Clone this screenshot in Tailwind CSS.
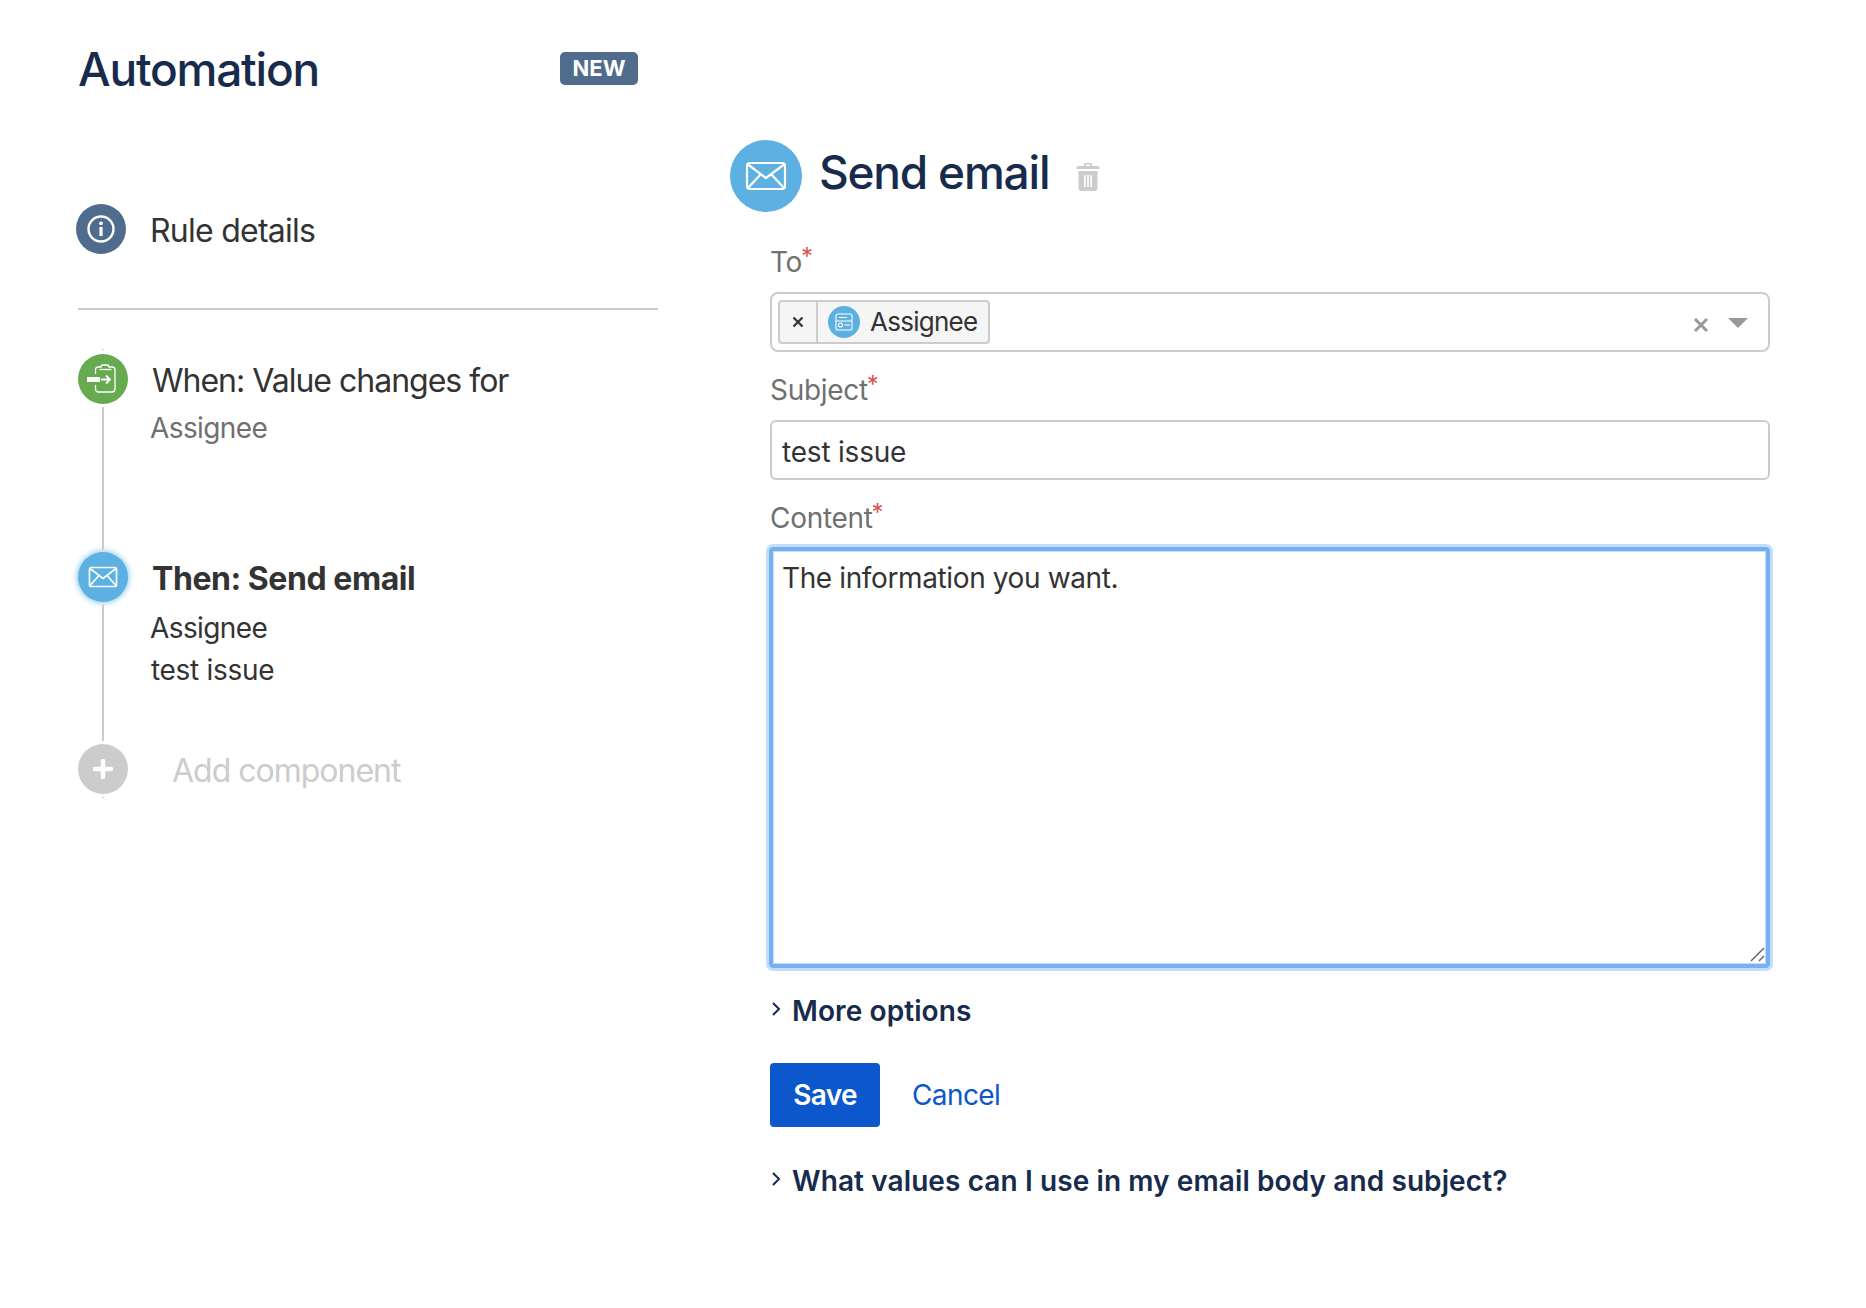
<!DOCTYPE html>
<html lang="en">
  <head>
    <meta charset="UTF-8" />
    <script src="https://cdn.jsdelivr.net/npm/@tailwindcss/browser@4"></script>
    <title>Automation</title>
  </head>
  <body class="h-[1308px] w-[1866px] flex bg-white font-['Inter',sans-serif] overflow-hidden">
    <!-- Sidebar -->
    <aside class="w-[730px] shrink-0 pl-[76px] flex flex-col">
      <div class="h-[52px] mt-[42px] flex items-center w-[562px] justify-between pl-[2px]">
        <h1 class="text-[46px] leading-[52px] mt-[1px] font-medium tracking-[-1.2px] text-[#172b4d]">Automation</h1>
        <span class="h-[33px] w-[78px] flex items-center justify-center rounded-[5px] bg-[#4f6c8c] text-white text-[22px] font-bold">NEW</span>
      </div>

      <div class="mt-[110px] flex items-center h-[50px]">
        <span class="w-[50px] h-[50px] rounded-full bg-[#4f6c8c] flex items-center justify-center">
          <svg width="30" height="30" viewBox="0 0 30 30" fill="none">
            <circle cx="15" cy="15" r="12.5" stroke="#fff" stroke-width="2.4" />
            <rect x="13.4" y="13" width="3.2" height="9" fill="#fff" />
            <circle cx="15" cy="9.3" r="1.9" fill="#fff" />
          </svg>
        </span>
        <span class="ml-[24px] mt-[4px] text-[32px] leading-[50px] tracking-[-0.75px] text-[#333]">Rule details</span>
      </div>

      <div class="mt-[54px] ml-[2px] w-[580px] h-[2px] bg-[#ccc]"></div>

      <!-- Steps -->
      <div class="ml-[2px] mt-[38px] flex flex-col">
        <div class="h-[6px] w-[50px] flex justify-center"><span class="w-[2px] h-[1px] mt-[1px] bg-[#ccc]"></span></div>
        <div class="flex h-[198px]">
          <div class="w-[50px] flex flex-col items-center">
            <span class="w-[50px] h-[50px] shrink-0 rounded-full bg-[#67ab51] flex items-center justify-center">
              <svg width="34" height="34" viewBox="0 0 34 34" fill="none">
                <path d="M9.500 12V8q0-3 3-3H15q0-2 2-2h4q2 0 2 2h3q3 0 3 3v19q0 3-3 3H12.500q-3 0-3-3v-4" stroke="#fff" stroke-width="1.300" />
                <path d="M13.500 7.500h12" stroke="#fff" stroke-width="1.300" />
                <rect x="1" y="15" width="13" height="5" fill="#fff" />
                <path d="M15 17.500h8M20 13.500l4 4-4 4" stroke="#fff" stroke-width="1.800" />
              </svg>
            </span>
            <span class="w-[2px] flex-1 mt-[3px] mb-[2px] bg-[#ccc]"></span>
          </div>
          <div class="ml-[24px]">
            <p class="text-[32px] leading-[44px] tracking-[-1px] text-[#333] mt-[5px]">When: Value changes for</p>
            <p class="text-[28px] leading-[40px] tracking-[-0.6px] text-[#707070] -ml-[2px] mt-[5px]">Assignee</p>
          </div>
        </div>
        <div class="flex h-[192px]">
          <div class="w-[50px] flex flex-col items-center">
            <span class="w-[50px] h-[50px] shrink-0 rounded-full bg-[#5cb0e2] shadow-[0_0_5px_2px_#a9d6f2] flex items-center justify-center">
              <svg width="30" height="22" viewBox="0 0 30 22" fill="none" stroke="#fff" stroke-width="1.700">
                <rect x="1.500" y="1.500" width="27" height="19" rx="2" />
                <path d="M2 2.500 15 12.500 28 2.500M2 19.500l9-10M28 19.500l-9-10" />
              </svg>
            </span>
            <span class="w-[2px] flex-1 mt-[3px] mb-[3px] bg-[#ccc]"></span>
          </div>
          <div class="ml-[24px]">
            <p class="text-[32px] leading-[44px] font-bold tracking-[-0.45px] text-[#333] mt-[5px]">Then: Send email</p>
            <p class="text-[28px] leading-[42px] tracking-[-0.6px] text-[#333] -ml-[2px] mt-[6px]">Assignee</p>
            <p class="text-[28px] leading-[42px] tracking-[-0.3px] text-[#333] -ml-[1px]">test issue</p>
          </div>
        </div>
        <div class="flex h-[50px]">
          <span class="w-[50px] h-[50px] shrink-0 rounded-full bg-[#ccc] flex items-center justify-center">
            <svg width="20" height="20" viewBox="0 0 20 20"><path d="M10 2v16M2 10h16" stroke="#fff" stroke-width="4.500" stroke-linecap="round" /></svg>
          </span>
          <p class="ml-[44px] text-[32px] leading-[50px] tracking-[-1px] text-[#ccc] mt-[2px]">Add component</p>
        </div>
        <div class="h-[5px] w-[50px] flex justify-center"><span class="w-[2px] h-[1px] mt-[3px] bg-[#ccc]"></span></div>
      </div>
    </aside>

    <!-- Editor -->
    <main class="w-[1042px] shrink-0 pt-[140px]">
      <div class="flex items-center h-[72px]">
        <span class="w-[72px] h-[72px] rounded-full bg-[#5cb0e2] flex items-center justify-center">
          <svg width="42" height="30" viewBox="0 0 42 30" fill="none" stroke="#fff" stroke-width="2.200">
            <rect x="2" y="2" width="38" height="26" rx="3" />
            <path d="M3 3.500 21 17 39 3.500M3 27l13-14M39 27 26 13" />
          </svg>
        </span>
        <h2 class="ml-[17px] text-[46px] leading-[52px] font-medium tracking-[-1.2px] text-[#172b4d] -mt-[8px]">Send email</h2>
        <svg class="ml-[27px] mt-[1px]" width="24" height="30" viewBox="0 0 24 30" fill="#ccc">
          <path d="M8 2.500q0-1.500 1.500-1.500h5Q16 1 16 2.500V4h6q1.500 0 1.500 1.500V7H.5V5.500Q.5 4 2 4h6zM10 2.500V4h4V2.500z" />
          <path d="M2.500 9h19v17q0 3-3 3h-13q-3 0-3-3zM8 13v12h1.600V13zM11.200 13v12h1.600V13zM14.400 13v12H16V13z" fill-rule="evenodd" />
        </svg>
      </div>

      <div class="ml-[40px] w-[1000px]">
        <label class="block mt-[31px] pt-[1px] h-[49px] text-[28px] leading-[36px] tracking-[-0.3px] text-[#707070]">To<sup class="text-[#d9534f] text-[24px] -ml-[1px] top-[-7px] leading-none">*</sup></label>
        <div class="h-[60px] border-2 border-[#ccc] rounded-[8px] flex items-center pl-[6px] pr-[20px]">
          <div class="h-[44px] w-[212px] flex items-stretch bg-[#f5f5f5] border-2 border-[#ccc] rounded-[4px]">
            <span class="w-[38px] flex items-center justify-center border-r-2 border-[#ccc]">
              <svg width="12" height="12" viewBox="0 0 12 12"><path d="M1.500 1.500l9 9M10.500 1.500l-9 9" stroke="#333" stroke-width="2.200" /></svg>
            </span>
            <span class="w-[32px] h-[32px] ml-[10px] self-center rounded-full bg-[#5cb0e2] flex items-center justify-center">
              <svg width="20" height="20" viewBox="0 0 20 20" fill="none" stroke="#fff" stroke-width="1.100">
                <rect x="2" y="2" width="16" height="16" rx="2" />
                <path d="M2 9h16M5 5.500h8" />
                <circle cx="6.500" cy="13" r="2" />
                <path d="M10.500 13H16" />
              </svg>
            </span>
            <span class="ml-[10px] text-[26px] leading-[40px] tracking-[-0.75px] text-[#333]">Assignee</span>
          </div>
          <svg class="ml-auto mt-[6px]" width="16" height="16" viewBox="0 0 16 16"><path d="M2 2l12 12M14 2 2 14" stroke="#999" stroke-width="3" /></svg>
          <span class="ml-[19px] mt-[2px] w-0 h-0 border-x-[10px] border-x-transparent border-t-[10px] border-t-[#999]"></span>
        </div>

        <label class="block mt-[18px] pt-[2px] h-[50px] text-[28px] leading-[36px] tracking-[-0.3px] text-[#707070]">Subject<sup class="text-[#d9534f] text-[24px] -ml-[1px] top-[-7px] leading-none">*</sup></label>
        <input type="text" value="test issue" class="block w-full h-[60px] border-2 border-[#ccc] rounded-[6px] px-[10px] pt-[3px] text-[28px] tracking-[-0.2px] text-[#333] outline-none" />

        <label class="block mt-[18px] pt-[2px] h-[49px] text-[28px] leading-[36px] tracking-[-0.3px] text-[#707070]">Content<sup class="text-[#d9534f] text-[24px] -ml-[1px] top-[-7px] leading-none">*</sup></label>
        <div class="relative w-[1001px] h-[421px] -ml-[1px]">
          <textarea class="block w-full h-full resize-none border-[4px] border-[#75b1f2] rounded-[4px] shadow-[0_0_0_3px_#c3defb,inset_0_0_0_1px_#c3defb] pl-[9px] pr-[8px] pt-[9px] text-[28px] leading-[36px] tracking-[-0.38px] text-[#333] outline-none">The information you want.</textarea>
          <svg class="absolute right-[5px] bottom-[6px]" width="15" height="15" viewBox="0 0 15 15" fill="none" stroke="#666" stroke-width="1.500"><path d="M1 14 14 1M9 14l5-5" /></svg>
        </div>

        <div class="mt-[23px] flex items-center h-[40px]">
          <svg class="-mt-[5px] ml-[1px]" width="10" height="16" viewBox="0 0 10 16" fill="none"><path d="M2 2l6 6-6 6" stroke="#172b4d" stroke-width="2" /></svg>
          <span class="ml-[11px] text-[28px] leading-[40px] font-semibold tracking-[0.1px] text-[#172b4d]">More options</span>
        </div>

        <div class="mt-[32px] flex items-center">
          <button class="w-[110px] h-[64px] rounded-[4px] bg-[#0c57cc] text-white text-[28px] font-semibold tracking-[-0.7px]">Save</button>
          <a class="ml-[32px] text-[28px] tracking-[-0.6px] text-[#0c57cc]">Cancel</a>
        </div>

        <div class="mt-[34px] flex items-center h-[40px]">
          <svg class="-mt-[5px] ml-[1px]" width="10" height="16" viewBox="0 0 10 16" fill="none"><path d="M2 2l6 6-6 6" stroke="#172b4d" stroke-width="2" /></svg>
          <span class="ml-[11px] text-[28px] leading-[40px] font-semibold tracking-[0.1px] text-[#172b4d]">What values can I use in my email body and subject?</span>
        </div>
      </div>
    </main>
  </body>
</html>
